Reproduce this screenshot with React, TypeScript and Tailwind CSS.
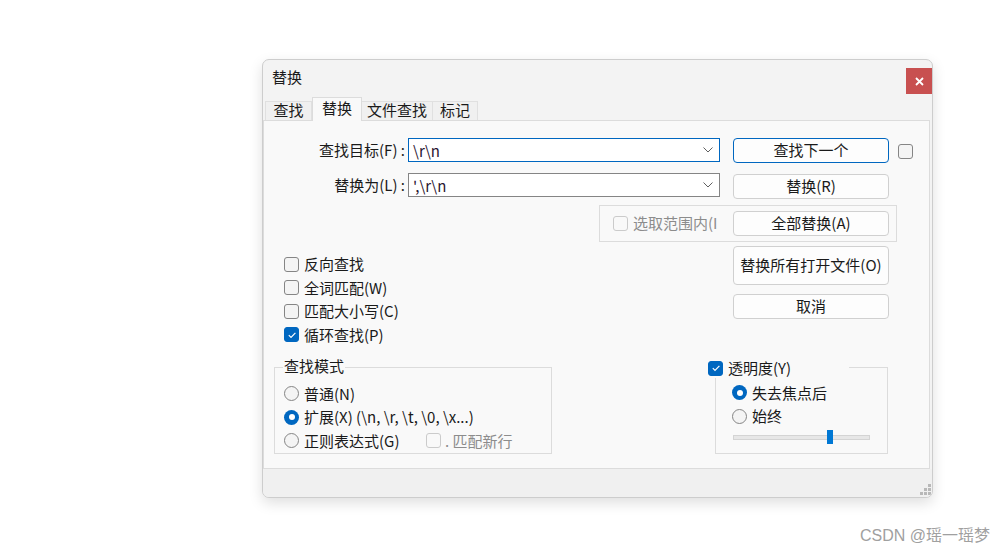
import React from "react";

const font = "font-['Noto_Sans_CJK_SC','Noto_Sans',sans-serif]";

function Check({ checked = false, disabled = false }: { checked?: boolean; disabled?: boolean }) {
  return (
    <span
      className={
        "flex h-[15px] w-[15px] shrink-0 items-center justify-center rounded-[3px] border " +
        (checked
          ? "border-[#0067c0] bg-[#0067c0]"
          : disabled
          ? "border-[#cbcbcb] bg-[#f9f9f9]"
          : "border-[#858585] bg-[#f4f4f4]")
      }
    >
      {checked && (
        <svg width="10" height="10" viewBox="0 0 10 10">
          <path d="M1.8 5.2 L4 7.4 L8.4 2.8" fill="none" stroke="white" strokeWidth="1.2" />
        </svg>
      )}
    </span>
  );
}

function Radio({ checked = false }: { checked?: boolean }) {
  return checked ? (
    <span className="flex h-[15px] w-[15px] shrink-0 items-center justify-center rounded-full bg-[#0067c0]">
      <span className="h-[6px] w-[6px] rounded-full bg-white" />
    </span>
  ) : (
    <span className="h-[15px] w-[15px] shrink-0 rounded-full border border-[#858585] bg-[#f4f4f4]" />
  );
}

function Btn({ children, def = false, tall = false }: { children: React.ReactNode; def?: boolean; tall?: boolean }) {
  return (
    <div
      className={
        "flex w-[156px] shrink-0 items-center justify-center rounded-[4px] border bg-[#fdfdfd] text-[15px] text-[#1a1a1a] " +
        (tall ? "h-[39px] " : "h-[25px] ") +
        (def ? "border-[#0067c0]" : "border-[#d0d0d0]")
      }
    >
      {children}
    </div>
  );
}

function Combo({ value, focused = false }: { value: string; focused?: boolean }) {
  return (
    <div
      className={
        "flex h-[24px] w-[312px] shrink-0 items-center justify-between border bg-white pl-[4px] pr-[6px] text-[15px] text-[#2a1530] " +
        (focused ? "border-[#0067c0]" : "border-[#858585]")
      }
    >
      <span className="leading-none">{value}</span>
      <svg width="10" height="6" viewBox="0 0 10 6">
        <path d="M0.5 0.5 L5 5 L9.5 0.5" fill="none" stroke="#606060" strokeWidth="1" />
      </svg>
    </div>
  );
}

function Row({ children, disabled = false }: { children: React.ReactNode; disabled?: boolean }) {
  return (
    <div className={"flex h-[23.5px] items-center gap-[5px] whitespace-nowrap text-[15px] " + (disabled ? "text-[#8c8c8c]" : "text-[#1a1a1a]")}>
      {children}
    </div>
  );
}

export default function App() {
  return (
    <div className={"h-[556px] w-[1006px] overflow-hidden bg-white pl-[262px] pt-[59px] " + font}>
      <div className="flex h-[439px] w-[671px] flex-col overflow-hidden rounded-[7px] border border-[#cdcdcd] bg-[#f3f3f3] shadow-[0_5px_14px_rgba(0,0,0,0.13)]">
        {/* title bar */}
        <div className="flex h-[37px] shrink-0 items-start justify-between">
          <div className="flex h-[37px] items-center pb-[2px] pl-[9px] text-[15px] text-[#1a1a1a]">替换</div>
          <div className="mt-[8px] flex h-[26px] w-[26px] items-center justify-center bg-[#c85050]">
            <svg width="9" height="9" viewBox="0 0 9 9">
              <path d="M1 1 L8 8 M8 1 L1 8" stroke="white" strokeWidth="1.8" />
            </svg>
          </div>
        </div>
        {/* tabs */}
        <div className="flex h-[23px] shrink-0 items-end pl-[2px] text-[15px] text-[#1a1a1a]">
          <div className="flex h-[19px] w-[47px] items-center justify-center border border-b-0 border-[#e0e0e0] bg-[#f0f0f0] pb-[3px] leading-none">查找</div>
          <div className="z-10 -mb-[1px] flex h-[24px] w-[50px] items-center justify-center border border-b-0 border-[#dcdcdc] bg-[#f9f9f9] pb-[5px] leading-none">替换</div>
          <div className="flex h-[19px] w-[71px] items-center justify-center border border-b-0 border-l-0 border-[#e0e0e0] bg-[#f0f0f0] pb-[3px] leading-none">文件查找</div>
          <div className="flex h-[19px] w-[45px] items-center justify-center border border-b-0 border-l-0 border-[#e0e0e0] bg-[#f0f0f0] pb-[3px] leading-none">标记</div>
        </div>
        {/* panel */}
        <div className="mr-[2px] flex h-[349px] shrink-0 flex-col border border-[#dcdcdc] bg-[#f9f9f9] text-[15px] text-[#1a1a1a]">
          {/* row 1 */}
          <div className="mt-[17px] flex items-start">
            <div className="flex h-[24px] w-[141px] items-center justify-end whitespace-nowrap">查找目标(F) :</div>
            <div className="ml-[3px]">
              <Combo value={"\\r\\n"} focused />
            </div>
            <div className="ml-[13px]">
              <Btn def>查找下一个</Btn>
            </div>
            <div className="ml-[9px] mt-[6px]">
              <Check />
            </div>
          </div>
          {/* row 2 */}
          <div className="mt-[10px] flex items-start">
            <div className="flex h-[24px] w-[141px] items-center justify-end whitespace-nowrap">替换为(L) :</div>
            <div className="ml-[3px]">
              <Combo value={"',\\r\\n"} />
            </div>
            <div className="ml-[13px] mt-[1px]">
              <Btn>替换(R)</Btn>
            </div>
          </div>
          {/* row 3 */}
          <div className="mt-[6px] flex">
            <div className="ml-[335px] flex h-[37px] w-[298px] items-center border border-[#dcdcdc] pl-[13px]">
              <Check disabled />
              <div className="ml-[5px] w-[85px] whitespace-nowrap text-[#8c8c8c]">选取范围内(I</div>
              <div className="ml-[15px]">
                <Btn>全部替换(A)</Btn>
              </div>
            </div>
          </div>
          {/* row 4 */}
          <div className="flex h-[125px]">
            <div className="ml-[20px] mt-[10.5px] flex w-[449px] flex-col">
              <Row><Check />反向查找</Row>
              <Row><Check />全词匹配(W)</Row>
              <Row><Check />匹配大小写(C)</Row>
              <Row><Check checked />循环查找(P)</Row>
            </div>
            <div className="mt-[4px] flex flex-col gap-[9px]">
              <Btn tall>替换所有打开文件(O)</Btn>
              <Btn>取消</Btn>
            </div>
          </div>
          {/* row 5 */}
          <div className="flex">
            <div className="relative ml-[10px] h-[87px] w-[278px] border border-[#dcdcdc] pl-[9px] pt-[14px]">
              <span className="absolute left-[8px] top-[-13px] bg-[#f9f9f9] px-[1px] leading-[22px]">查找模式</span>
              <Row><Radio />普通(N)</Row>
              <Row><Radio checked />{"扩展(X) (\\n, \\r, \\t, \\0, \\x...)"}</Row>
              <Row>
                <Radio />
                <span className="w-[117px]">正则表达式(G)</span>
                <Check disabled />
                <span className="-ml-[1px] text-[#8c8c8c]">. 匹配新行</span>
              </Row>
            </div>
            <div className="relative ml-[163px] h-[87px] w-[173px] border border-[#dcdcdc] pl-[16px] pt-[13px]">
              <span className="absolute left-[-8px] top-[-10px] flex h-[20px] w-[141px] items-center gap-[5px] bg-[#f9f9f9]">
                <Check checked />
                透明度(Y)
              </span>
              <Row><Radio checked />失去焦点后</Row>
              <Row><Radio />始终</Row>
              <div className="relative ml-[1px] mt-[2px] flex h-[14px] w-[137px] items-center">
                <div className="h-[5px] w-[137px] border border-[#d4d4d4] bg-[#e7e7e7]" />
                <div className="absolute left-[94px] top-0 h-[14px] w-[6px] bg-[#0078d4]" />
              </div>
            </div>
          </div>
        </div>
        {/* bottom strip */}
        <div className="flex flex-1 items-end justify-end bg-[#f0f0f0] pb-[1px]">
          <svg width="12" height="12" viewBox="0 0 12 12">
            <rect x="8" y="0" width="3" height="3" fill="#b8b8b8" />
            <rect x="4" y="4" width="3" height="3" fill="#b8b8b8" />
            <rect x="8" y="4" width="3" height="3" fill="#b8b8b8" />
            <rect x="0" y="8" width="3" height="3" fill="#b8b8b8" />
            <rect x="4" y="8" width="3" height="3" fill="#b8b8b8" />
            <rect x="8" y="8" width="3" height="3" fill="#b8b8b8" />
          </svg>
        </div>
      </div>
      <div className="mt-[28px] w-[728px] text-right font-['Liberation_Sans','Noto_Sans_CJK_SC',sans-serif] text-[16px] leading-[20px] text-[#a0a0a0]">
        CSDN @瑶一瑶梦
      </div>
    </div>
  );
}
